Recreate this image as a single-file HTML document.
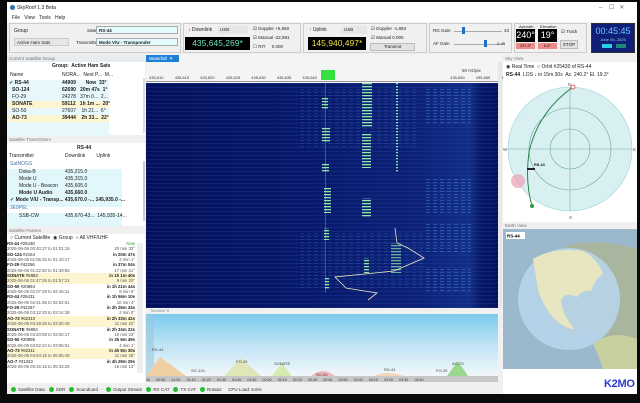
<!DOCTYPE html>
<html><head><meta charset="utf-8"><style>
*{box-sizing:border-box;margin:0;padding:0}
body{width:640px;height:403px;background:#0a0a0a;overflow:hidden;font-family:"Liberation Sans",sans-serif;font-size:5px;color:#222;position:relative}
.a{position:absolute}
.win{position:absolute;left:7px;top:2px;width:630px;height:392px;background:#f0f0f0}
.hdr{background:#e8ebef;color:#777;font-size:4.5px;padding:1px 2px;height:7px}
.row{position:absolute;left:0;height:7px;line-height:7px;white-space:nowrap}
.b{font-weight:bold}
.dot{display:inline-block;width:5px;height:5px;border-radius:50%;background:#22c030;vertical-align:middle;margin:0 2px 0 4px}
</style></head><body>
<div class="win">
 <div class="a" style="left:0;top:0;width:630px;height:11px;background:#fff"></div>
 <div class="a" style="left:3px;top:3px;width:5px;height:5px;border-radius:50%;background:#2a6fb0"></div>
 <div class="a" style="left:10px;top:3px;font-size:5px">SkyRoof 1.3 Beta</div>
 <div class="a" style="left:592px;top:2px;font-size:6px;color:#666">–&nbsp;&nbsp;&nbsp;&nbsp;☐&nbsp;&nbsp;&nbsp;✕</div>
 <div class="a" style="left:0;top:11px;width:630px;height:9px;background:#fff;font-size:5px;padding:2px 5px">File&nbsp;&nbsp;&nbsp;View&nbsp;&nbsp;&nbsp;Tools&nbsp;&nbsp;&nbsp;Help</div>
 <div class="a" style="left:2px;top:21px;width:172px;height:30px;border:1px solid #ccc;background:#f0f0f0"></div>
 <div class="a" style="left:7px;top:26px;font-size:5px">Group</div>
 <div class="a" style="left:7px;top:36px;width:55px;height:8px;background:#e6e6e6;border:1px solid #ccc;font-size:4.5px;padding:1px 2px">Active Ham Sats</div>
 <div class="a" style="left:80px;top:26px;font-size:4.5px">Satellite</div>
 <div class="a" style="left:89px;top:24px;width:82px;height:8px;background:#e4fbfd;border:1px solid #aaa;font-size:4.5px;padding:1px 2px"><b>RS-44</b></div>
 <div class="a" style="left:69px;top:38px;font-size:4.5px">Transmitter</div>
 <div class="a" style="left:89px;top:36px;width:82px;height:8px;background:#e4fbfd;border:1px solid #aaa;font-size:4.5px;padding:1px 2px"><b>Mode V/U - Transponder</b></div>

 <div class="a" style="left:176px;top:21px;width:118px;height:30px;border:1px solid #ccc"></div>
 <div class="a" style="left:181px;top:25px;font-size:5px">↓ Downlink</div>
 <div class="a" style="left:211px;top:24px;width:30px;height:8px;background:#e6e6e6;font-size:4.5px;padding:1px 2px">USB</div>
 <div class="a" style="left:246px;top:24px;font-size:4.5px">☑ Doppler +5,650</div>
 <div class="a" style="left:246px;top:33px;font-size:4.5px">☑ Manual -22,991</div>
 <div class="a" style="left:246px;top:42px;font-size:4.5px">☐ RIT&nbsp;&nbsp;&nbsp;&nbsp;&nbsp;0.000</div>
 <div class="a" style="left:178px;top:35px;width:65px;height:13px;background:#000;color:#6fe0c0;font-size:8.5px;text-align:center;line-height:13px">435,645,269*</div>

 <div class="a" style="left:296px;top:21px;width:124px;height:30px;border:1px solid #ccc"></div>
 <div class="a" style="left:302px;top:25px;font-size:5px">↑ Uplink</div>
 <div class="a" style="left:335px;top:24px;width:25px;height:8px;background:#e6e6e6;font-size:4.5px;padding:1px 2px">USB</div>
 <div class="a" style="left:364px;top:24px;font-size:4.5px">☑ Doppler -1,893</div>
 <div class="a" style="left:364px;top:33px;font-size:4.5px">☑ Manual 0.000</div>
 <div class="a" style="left:363px;top:41px;width:45px;height:8px;background:#e2e2e2;border:1px solid #bbb;font-size:4.5px;text-align:center;line-height:6px">Transmit</div>
 <div class="a" style="left:301px;top:35px;width:58px;height:13px;background:#000;color:#f2e64a;font-size:8.5px;text-align:center;line-height:13px">145,940,497*</div>

 <div class="a" style="left:422px;top:21px;width:83px;height:30px;border:1px solid #ccc"></div>
 <div class="a" style="left:426px;top:26px;font-size:4.5px">RG Gain</div>
 <div class="a" style="left:447px;top:29px;width:48px;height:1px;background:#aaa"></div>
 <div class="a" style="left:455px;top:25px;width:3px;height:7px;background:#1a6fd0"></div>
 <div class="a" style="left:497px;top:26px;font-size:4.5px">43</div>
 <div class="a" style="left:426px;top:39px;font-size:4.5px">AF Gain</div>
 <div class="a" style="left:447px;top:42px;width:48px;height:1px;background:#aaa"></div>
 <div class="a" style="left:477px;top:38px;width:3px;height:7px;background:#1a6fd0"></div>
 <div class="a" style="left:490px;top:39px;font-size:4px">0 dB</div>

 <div class="a" style="left:507px;top:21px;width:73px;height:30px;border:1px solid #ccc"></div>
 <div class="a" style="left:512px;top:22px;font-size:4px">Azimuth</div>
 <div class="a" style="left:533px;top:22px;font-size:4px">Elevation</div>
 <div class="a" style="left:509px;top:27px;width:19px;height:13px;background:#000;color:#fff;font-size:9px;text-align:center;line-height:13px">240°</div>
 <div class="a" style="left:531px;top:27px;width:19px;height:13px;background:#000;color:#fff;font-size:9px;text-align:center;line-height:13px">19°</div>
 <div class="a" style="left:509px;top:41px;width:19px;height:6px;background:#f08a8a;font-size:4px;text-align:center;line-height:6px">237.8°</div>
 <div class="a" style="left:531px;top:41px;width:19px;height:6px;background:#f08a8a;font-size:4px;text-align:center;line-height:6px">6.8°</div>
 <div class="a" style="left:554px;top:27px;font-size:4.5px">☑ Track</div>
 <div class="a" style="left:553px;top:38px;width:18px;height:9px;background:#e2e2e2;border:1px solid #bbb;font-size:4.5px;text-align:center;line-height:7px">STOP</div>

 <div class="a" style="left:584px;top:21px;width:44px;height:30px;background:#0f1f78;border:1px solid #333"></div>
 <div class="a" style="left:584px;top:24px;width:44px;text-align:center;color:#6ac8ff;font-size:9px">00:45:45</div>
 <div class="a" style="left:584px;top:35px;width:44px;text-align:center;color:#9cd;font-size:4px">June 06, 2025</div>
 <div class="a" style="left:595px;top:42px;width:10px;height:4px;background:#2ad0e0"></div>
 <div class="a" style="left:609px;top:42px;width:10px;height:4px;background:#1a8a7a"></div>

 <div class="a" style="left:0;top:53px;width:138px;height:80px;background:#fff">
  <div class="hdr">Current Satellite Group</div>
  <div class="row b" style="top:8px;left:45px">Group:&nbsp; Active Ham Sats</div>
  <div class="row" style="top:17px;left:3px">Name</div><div class="row" style="top:17px;left:55px">NORA...&nbsp; Next P...&nbsp; M...</div>
  <div class="a" style="left:0;top:25px;width:102px;height:56px;background:#e6f8fc"></div>
  <div class="a" style="left:0;top:46px;width:102px;height:7px;background:#fdf5d0"></div>
  <div class="a" style="left:0;top:60px;width:102px;height:7px;background:#fdf5d0"></div>
  <div class="row b" style="top:25px;left:2px">✓ RS-44</div><div class="row b" style="top:25px;left:55px">44909&nbsp;&nbsp;&nbsp;&nbsp;&nbsp;&nbsp;&nbsp;Now&nbsp; 33°</div>
  <div class="row b" style="top:32px;left:5px">SO-124</div><div class="row b" style="top:32px;left:55px">62690&nbsp;&nbsp; 20m 47s&nbsp; 1°</div>
  <div class="row" style="top:39px;left:5px">FO-29</div><div class="row" style="top:39px;left:55px">24278&nbsp;&nbsp; 37m 0...&nbsp; 2...</div>
  <div class="row b" style="top:46px;left:5px">SONATE</div><div class="row b" style="top:46px;left:55px">59112&nbsp;&nbsp; 1h 1m ...&nbsp; 20°</div>
  <div class="row" style="top:53px;left:5px">SO-50</div><div class="row" style="top:53px;left:55px">27607&nbsp;&nbsp;&nbsp; 1h 21...&nbsp; 6°</div>
  <div class="row b" style="top:60px;left:5px">AO-73</div><div class="row b" style="top:60px;left:55px">39444&nbsp;&nbsp;&nbsp; 2h 33...&nbsp; 22°</div>
  <div class="a" style="left:136px;top:23px;width:2px;height:55px;background:#ddd"></div>
 </div>
 <div class="a" style="left:0;top:134px;width:138px;height:90px;background:#fff">
  <div class="hdr" style="background:#f0f0f0">Satellite Transmitters</div>
  <div class="row b" style="top:9px;left:70px">RS-44</div>
  <div class="row" style="top:17px;left:2px">Transmitter</div><div class="row" style="top:17px;left:58px">Downlink&nbsp;&nbsp;&nbsp;&nbsp;&nbsp;&nbsp;&nbsp;&nbsp;Uplink</div>
  <div class="row" style="top:25px;left:3px;color:#47a">SatNOGS</div>
  <div class="a" style="left:0;top:33px;width:115px;height:38px;background:#e2f7fb"></div>
  <div class="row" style="top:33px;left:12px">Doka-B</div><div class="row" style="top:33px;left:58px">435,215.0</div>
  <div class="row" style="top:40px;left:12px">Mode U</div><div class="row" style="top:40px;left:58px">435,315.0</div>
  <div class="row" style="top:47px;left:12px">Mode U - Beacon</div><div class="row" style="top:47px;left:58px">435,605.0</div>
  <div class="row b" style="top:54px;left:12px">Mode U Audio</div><div class="row b" style="top:54px;left:58px">435,660.0</div>
  <div class="row b" style="top:61px;left:3px">✓ Mode V/U - Transp... 435,670.0 -... 145,935.0 -...</div>
  <div class="row" style="top:69px;left:3px;color:#47a">JE9PEL</div>
  <div class="a" style="left:0;top:77px;width:115px;height:13px;background:#e2f7fb"></div>
  <div class="row" style="top:77px;left:12px">SSB-CW</div><div class="row" style="top:77px;left:58px">435,670-43...&nbsp; 145,935-14...</div>
  <div class="a" style="left:136px;top:25px;width:2px;height:60px;background:#ccc"></div>
 </div>
 <div class="a" style="left:0;top:225px;width:138px;height:156px;background:#fff">
  <div class="hdr" style="background:#f0f0f0">Satellite Passes</div>
  <div class="row" style="top:8px;left:3px">○ Current Satellite&nbsp; ◉ Group&nbsp; ○ All VHF/UHF</div>
 </div>
 <div class="a" style="left:130px;top:241px;width:6px;height:130px;background:#eee"></div>

 <!-- waterfall -->
 <div class="a" style="left:139px;top:53px;width:356px;height:7px;background:#f5f5f5"></div>
 <div class="a" style="left:139px;top:53px;width:33px;height:7px;background:#1e7fd6;color:#fff;font-size:4.5px;padding:1px 3px">Waterfall&nbsp; ✕</div>
 <div class="a" style="left:139px;top:60px;width:352px;height:21px;background:#f4f4f6"></div>
 <div class="a" style="left:455px;top:66px;font-size:4.5px;color:#333">50 Hz/pix</div>
 <div class="a" style="left:314px;top:68px;width:14px;height:10px;background:#33e040"></div>
 <div class="a" style="left:142px;top:73px;font-size:4px;color:#333;word-spacing:10px;white-space:nowrap">435,610 435,615 435,620 435,625 435,630 435,635 435,640 &nbsp;&nbsp;&nbsp;&nbsp;&nbsp;&nbsp;&nbsp;&nbsp;&nbsp;&nbsp; 435,650 435,655 435,660 435,665 435,670 435,675</div>
 <div class="a" style="left:139px;top:79px;width:352px;height:1px;background:#999"></div>
 <svg class="a" style="left:139px;top:81px" width="352" height="225" viewBox="0 0 352 225">
  <defs>
   <pattern id="ln" width="352" height="4" patternUnits="userSpaceOnUse"><rect width="352" height="1" fill="#2448b0" opacity=".3"/></pattern>
   <pattern id="sig" width="6" height="3" patternUnits="userSpaceOnUse"><rect width="6" height="1.3" fill="#8fe8a8"/></pattern>
   <pattern id="nz" width="7" height="3" patternUnits="userSpaceOnUse"><rect width="4" height="1" fill="#5aa8e8"/></pattern>
   <linearGradient id="g" x1="0" x2="1"><stop offset="0" stop-color="#05105a"/><stop offset=".45" stop-color="#081868"/><stop offset=".78" stop-color="#0d2278"/><stop offset=".92" stop-color="#122e86"/><stop offset=".95" stop-color="#081866"/><stop offset="1" stop-color="#05105a"/></linearGradient>
  </defs>
  <rect width="352" height="225" fill="url(#g)"/>
  <rect width="352" height="225" fill="url(#ln)"/>
  <g opacity=".35">
   <rect x="280" y="5" width="45" height="35" fill="url(#nz)"/>
   <rect x="280" y="95" width="45" height="35" fill="url(#nz)"/>
   <rect x="280" y="140" width="45" height="30" fill="url(#nz)"/>
   <rect x="280" y="185" width="45" height="25" fill="url(#nz)"/>
   <rect x="150" y="5" width="120" height="60" fill="url(#nz)" opacity=".5"/>
   <rect x="150" y="150" width="130" height="55" fill="url(#nz)" opacity=".5"/>
  </g>
  <g>
   <rect x="179" y="0" width="1" height="210" fill="#6ac0c0" opacity=".4"/>
   <rect x="176" y="15" width="6" height="12" fill="url(#sig)"/><rect x="176" y="45" width="8" height="14" fill="url(#sig)"/>
   <rect x="176" y="80" width="7" height="10" fill="url(#sig)"/><rect x="178" y="105" width="7" height="25" fill="url(#sig)"/>
   <rect x="178" y="145" width="5" height="12" fill="url(#sig)"/><rect x="179" y="195" width="4" height="12" fill="url(#sig)"/>
   <rect x="216" y="0" width="10" height="45" fill="url(#sig)"/><rect x="216" y="50" width="9" height="35" fill="url(#sig)"/>
   <rect x="216" y="115" width="9" height="20" fill="url(#sig)"/><rect x="218" y="175" width="5" height="15" fill="url(#sig)"/>
   <rect x="250" y="0" width="2" height="90" fill="url(#sig)"/><rect x="245" y="160" width="10" height="30" fill="url(#sig)" opacity=".7"/>
  </g>
  <path d="M249 145 L251 160 L262 165 L278 175 L248 188 L189 194 L200 205 L231 210 L222 217" stroke="#eee8c0" stroke-width=".8" fill="none"/>
 </svg>
 <div class="a" style="left:491px;top:60px;width:4px;height:246px;background:#e8e8e8"></div>

 <div class="a" style="left:139px;top:306px;width:356px;height:6px;background:#f0f0f0;font-size:4px;color:#888;padding:0 4px">Timeline ✕</div>
 <svg class="a" style="left:139px;top:312px" width="352" height="70" viewBox="0 0 352 70">
  <defs><linearGradient id="sk" x1="0" y1="0" x2="0" y2="1"><stop offset="0" stop-color="#7ccbef"/><stop offset=".5" stop-color="#bfe3f5"/><stop offset="1" stop-color="#f2f8fb"/></linearGradient></defs>
  <rect width="352" height="62" fill="url(#sk)"/>
  <rect width="8" height="62" fill="#9ac8dc" opacity=".6"/>
  <path d="M0 62 L14 43 L40 62Z" fill="#f0cfa4"/>
  <path d="M78 62 L95 44 L115 62Z" fill="#dfe6b8"/>
  <path d="M126 62 L136 49 L146 62Z" fill="#d4ecb0"/>
  <path d="M165 62 Q177 52 189 62Z" fill="#f4b8c0"/>
  <path d="M228 62 Q242 56 258 62Z" fill="#f2d6b8"/>
  <path d="M301 62 L312 47 L322 62Z" fill="#9ad890"/>
  <g font-size="4" fill="#444" font-family="Liberation Sans">
   <text x="6" y="37">RS-44</text><text x="45" y="58">SO-124</text><text x="90" y="49">FO-29</text><text x="128" y="51">SONATE</text><text x="170" y="62">SO-50</text><text x="238" y="57">RS-44</text><text x="290" y="58">FO-29</text><text x="306" y="51">AO-73</text>
  </g>
  <rect y="62" width="352" height="6" fill="#c8c8c8"/>
  <text x="0" y="67" font-size="3.6" fill="#333" font-family="Liberation Sans" word-spacing="5.2">40 00:50 01:00 01:10 01:20 01:30 01:40 01:50 02:00 02:10 02:20 02:30 02:40 02:50 03:00 03:10 03:20 03:30 03:40</text>
 </svg>

 <div class="a" style="left:496px;top:53px;width:134px;height:167px;background:#fff">
  <div class="hdr" style="background:#f0f0f0">Sky View</div>
  <div class="row" style="top:9px;left:3px">◉ Real Time&nbsp; ○ Orbit #25430 of RS-44</div>
  <div class="row" style="top:17px;left:3px"><b>RS-44</b>&nbsp; LOS ↓ in 15m 30s&nbsp; Az. 240.2° El. 19.3°</div>
 </div>
 <svg class="a" style="left:496px;top:80px" width="134" height="138" viewBox="0 0 134 138">
  <circle cx="67" cy="67" r="62" fill="#d8f0f2" stroke="#9ccfcf" stroke-width=".6"/>
  <circle cx="67" cy="67" r="41" fill="none" stroke="#6fa8a0" stroke-width=".6"/>
  <circle cx="67" cy="67" r="20" fill="none" stroke="#6fa8a0" stroke-width=".6"/>
  <line x1="5" y1="67" x2="129" y2="67" stroke="#7ab0a8" stroke-width=".6"/>
  <line x1="67" y1="5" x2="67" y2="129" stroke="#7ab0a8" stroke-width=".6"/>
  <circle cx="15" cy="99" r="7" fill="#f0a0b0" opacity=".7"/>
  <path d="M70 5 Q35 30 26 70 Q22 100 29 124" stroke="#1a7a3a" stroke-width=".9" fill="none"/>
  <circle cx="70" cy="5" r="2" fill="#fff" stroke="#d33" stroke-width=".8"/>
  <circle cx="29" cy="124" r="2" fill="#2a9a3a"/>
  <rect x="24" y="86" width="8" height="2" fill="#222"/>
  <g font-size="4.5" fill="#555" font-family="Liberation Sans"><text x="65" y="4">N</text><text x="0" y="69">W</text><text x="130" y="69">E</text><text x="66" y="137">S</text><text x="31" y="84" font-weight="bold" fill="#111" font-size="3.8">RS-44</text></g>
 </svg>
 <div class="a" style="left:496px;top:220px;width:134px;height:7px;background:#f0f0f0;font-size:4.5px;color:#777;padding:1px 2px">Earth View</div>
 <svg class="a" style="left:496px;top:227px" width="134" height="140" viewBox="0 0 134 140">
  <rect width="134" height="140" fill="#9cb8cc"/>
  <path d="M0 0 H134 V20 Q100 10 70 15 Q40 25 30 60 Q35 80 50 95 Q60 100 70 110 Q78 100 90 105 Q110 110 134 120 V0Z" fill="#a8b6a0"/>
  <circle cx="66" cy="70" r="51" fill="#b8d6ec" opacity=".85"/>
  <path d="M30 30 Q50 18 80 22 Q95 30 100 45 Q92 50 88 62 Q80 60 74 68 Q62 62 58 72 Q60 88 72 100 Q62 100 52 90 Q40 78 35 60Z" fill="#e8e6c0"/>
  <path d="M90 115 Q110 100 134 110 V140 H100 Q95 125 90 115Z" fill="#c8d0a0"/>
  <rect x="3" y="3" width="19" height="7" fill="#fff"/>
  <text x="4" y="8.5" font-size="4.5" font-weight="bold" font-family="Liberation Sans">RS-44</text>
 </svg>
 <div class="a" style="left:496px;top:367px;width:134px;height:25px;background:#fff"></div>
 <div class="a" style="left:597px;top:376px;font-size:11px;font-weight:bold;color:#2a3ad0;letter-spacing:-.3px">K2MO</div>

 <div class="a" style="left:0;top:383px;width:496px;height:9px;font-size:4.5px;line-height:9px;white-space:nowrap;color:#333">
  <span class="dot"></span>Satellite Data<span class="dot"></span>SDR<span class="dot"></span>Soundcard&nbsp; ·<span class="dot"></span>Output Stream<span class="dot"></span>RX CAT<span class="dot"></span>TX CAT<span class="dot"></span>Rotator&nbsp;&nbsp;&nbsp;&nbsp; CPU Load: 8.6%
 </div>
</div>
<div class="a" style="left:7px;top:241px;width:128px;font-size:4.3px;line-height:5.35px">
<div><b>RS-44</b> #25430<span style="float:right;color:#2a2">Now</span></div><div style="color:#555">2025-06-06 00:40:27 to 01:01:15<span style="float:right">20 min 33°</span></div>
<div><b>SO-124</b> #2164<span style="float:right"><b>in 20m 47s</b></span></div><div style="color:#555">2025-06-06 01:06:32 to 01:10:17<span style="float:right">3 min 1°</span></div>
<div><b>FO-29</b> #42256<span style="float:right"><b>in 37m 04s</b></span></div><div style="color:#555">2025-06-06 01:22:50 to 01:39:55<span style="float:right">17 min 21°</span></div>
<div style="background:#fdf5d0"><b>SONATE</b> #6883<span style="float:right"><b>in 1h 1m 40s</b></span></div><div style="color:#555;background:#fdf5d0">2025-06-06 01:47:26 to 01:57:21<span style="float:right">9 min 20°</span></div>
<div><b>SO-50</b> #20894<span style="float:right"><b>in 1h 21m 44s</b></span></div><div style="color:#555">2025-06-06 02:07:29 to 02:16:11<span style="float:right">8 min 6°</span></div>
<div><b>RS-44</b> #25431<span style="float:right"><b>in 1h 56m 10s</b></span></div><div style="color:#555">2025-06-06 02:41:56 to 02:52:51<span style="float:right">10 min 4°</span></div>
<div><b>FO-29</b> #42257<span style="float:right"><b>in 2h 26m 34s</b></span></div><div style="color:#555">2025-06-06 03:12:20 to 03:14:38<span style="float:right">2 min 0°</span></div>
<div style="background:#fdf5d0"><b>AO-73</b> #62310<span style="float:right"><b>in 2h 33m 42s</b></span></div><div style="color:#555;background:#fdf5d0">2025-06-06 03:19:28 to 03:30:49<span style="float:right">11 min 22°</span></div>
<div><b>SONATE</b> #6884<span style="float:right"><b>in 2h 34m 22s</b></span></div><div style="color:#555">2025-06-06 03:20:08 to 03:30:17<span style="float:right">10 min 23°</span></div>
<div><b>SO-50</b> #20895<span style="float:right"><b>in 3h 6m 49s</b></span></div><div style="color:#555">2025-06-06 03:52:34 to 03:56:51<span style="float:right">4 min 1°</span></div>
<div style="background:#fdf5d0"><b>AO-73</b> #62311<span style="float:right"><b>in 4h 8m 30s</b></span></div><div style="color:#555;background:#fdf5d0">2025-06-06 04:54:15 to 05:05:49<span style="float:right">11 min 28°</span></div>
<div><b>AO-7</b> #31343<span style="float:right"><b>in 4h 29m 29s</b></span></div><div style="color:#555">2025-06-06 05:15:15 to 05:33:25<span style="float:right">18 min 13°</span></div>
</div>
</body></html>
